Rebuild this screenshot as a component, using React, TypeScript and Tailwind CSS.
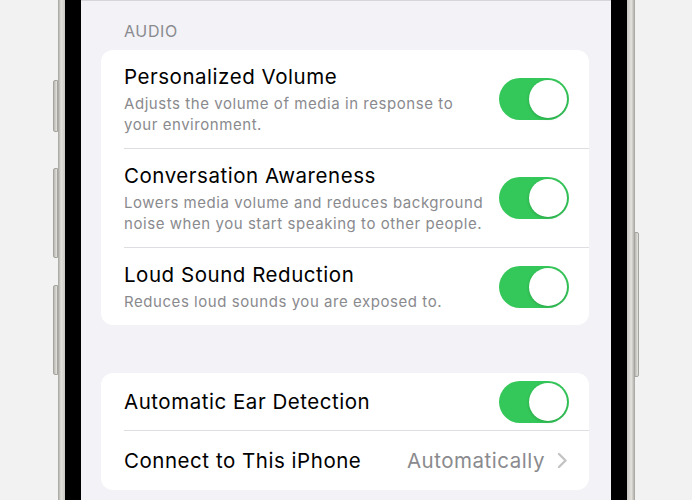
import React from 'react'

type Row = { title: string; desc?: string[] }

const audioRows: Row[] = [
  { title: 'Personalized Volume', desc: ['Adjusts the volume of media in response to', 'your environment.'] },
  { title: 'Conversation Awareness', desc: ['Lowers media volume and reduces background', 'noise when you start speaking to other people.'] },
  { title: 'Loud Sound Reduction', desc: ['Reduces loud sounds you are exposed to.'] },
]

function Toggle() {
  return (
    <div className="relative w-[70px] h-[42px] shrink-0 rounded-full bg-[#34c759]">
      <div className="absolute right-[2px] top-[2px] w-[38px] h-[38px] rounded-full bg-white shadow-[0_1px_3px_rgba(0,0,0,0.18)]" />
    </div>
  )
}

function Chevron() {
  return (
    <svg width="10" height="17" viewBox="0 0 10 17" fill="none" className="shrink-0">
      <path d="M2 2l6.5 6.5L2 15" stroke="#c4c4c7" strokeWidth="2.4" strokeLinecap="round" strokeLinejoin="round" />
    </svg>
  )
}

function SideButton({ className }: { className: string }) {
  return <div className={`absolute w-[5px] bg-[linear-gradient(90deg,#b9b8b2,#e6e5e0)] border border-[#a5a49e] ${className}`} />
}

export default function App() {
  return (
    <div className="relative w-[692px] h-[500px] overflow-hidden bg-[#f2f2f2] flex" style={{ fontFamily: 'Inter, "Noto Sans", sans-serif' }}>
      {/* hardware buttons */}
      <SideButton className="left-[53px] top-[80px] h-[52px] rounded-l-[2px]" />
      <SideButton className="left-[53px] top-[168px] h-[90px] rounded-l-[2px]" />
      <SideButton className="left-[53px] top-[285px] h-[90px] rounded-l-[2px]" />
      <SideButton className="left-[634px] top-[232px] h-[145px] rounded-r-[2px]" />

      <div className="ml-[58px] flex h-full">
        <div className="w-[7px] h-full bg-[linear-gradient(90deg,#a3a29c,#e2e1dc_45%,#c9c7c1)]" />
        <div className="w-[16px] h-full bg-black" />

        {/* screen */}
        <div className="w-[530px] h-full bg-[#f2f2f7] border-t border-[#d6d6da] flex flex-col text-black">
          <div className="pt-[20px] pl-[43px] text-[16px] leading-[20px] text-[#8a8a8e] tracking-[0.04em]">AUDIO</div>

          <div className="mt-[9px] ml-[20px] mr-[22px] bg-white rounded-[12px] overflow-hidden">
            {audioRows.map((row, i) => (
              <div key={row.title} className="pl-[23px] flex">
                <div className={`flex-1 flex items-center pr-[20px] ${i < audioRows.length - 1 ? 'border-b border-[#dedee2]' : ''}`}>
                  <div className="flex-1 pt-[13px] pb-[13px]">
                    <div className="text-[20.5px] leading-[28px] tracking-[0.026em]">{row.title}</div>
                    <div className="mt-[2px] text-[15px] leading-[21px] text-[#8a8a8e] tracking-[0.037em]">
                      {row.desc?.map((line) => (
                        <div key={line}>{line}</div>
                      ))}
                    </div>
                  </div>
                  <Toggle />
                </div>
              </div>
            ))}
          </div>

          <div className="mt-[48px] ml-[20px] mr-[22px] bg-white rounded-[12px] overflow-hidden">
            <div className="pl-[23px] flex">
              <div className="flex-1 h-[58px] flex items-center pr-[20px] border-b border-[#dedee2]">
                <div className="flex-1 text-[20.5px] leading-[28px] tracking-[0.026em]">Automatic Ear Detection</div>
                <Toggle />
              </div>
            </div>
            <div className="pl-[23px] flex">
              <div className="flex-1 h-[59px] flex items-center pr-[22px] gap-[12px]">
                <div className="flex-1 text-[20.5px] leading-[28px] tracking-[0.026em]">Connect to This iPhone</div>
                <div className="text-[20.5px] leading-[28px] text-[#8a8a8e] tracking-[0.026em]">Automatically</div>
                <Chevron />
              </div>
            </div>
          </div>
        </div>

        <div className="w-[16px] h-full bg-black" />
        <div className="w-[8px] h-full bg-[linear-gradient(90deg,#c9c7c1,#e2e1dc_55%,#a3a29c)]" />
      </div>
    </div>
  )
}
